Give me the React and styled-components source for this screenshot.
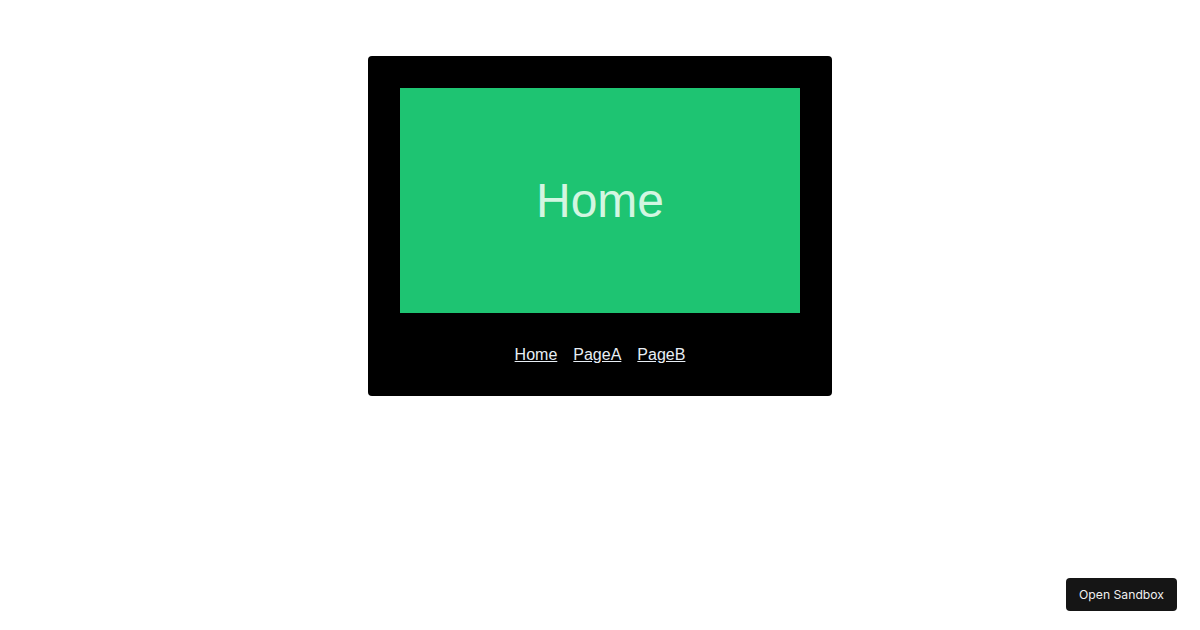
import React from "react";
import styled, { createGlobalStyle } from "styled-components";

const Global = createGlobalStyle`
  html, body { margin: 0; padding: 0; background: #ffffff; }
  body { font-family: "Liberation Sans", Arial, sans-serif; }
`;

const Page = styled.div`
  display: flex;
  justify-content: center;
  padding-top: 56px;
`;

const Card = styled.div`
  width: 464px;
  box-sizing: border-box;
  background: #000;
  border-radius: 4px;
  padding: 32px 32px 0;
  display: flex;
  flex-direction: column;
`;

const Screen = styled.div`
  height: 225px;
  background: #1ec472;
  display: flex;
  align-items: center;
  justify-content: center;
  color: #d3f6e1;
  font-size: 48px;
  font-family: "Liberation Sans", Arial, sans-serif;
`;

const Nav = styled.nav`
  display: flex;
  justify-content: center;
  gap: 16px;
  padding: 33px 0 32px;
  line-height: 18px;
`;

const NavLink = styled.a`
  color: #e8eef5;
  font-size: 16px;
  text-decoration: underline;
  cursor: pointer;
`;

const SandboxButton = styled.button`
  position: fixed;
  right: 23px;
  bottom: 19px;
  width: 111px;
  height: 33px;
  background: #151515;
  color: #f0f0f0;
  border: none;
  border-radius: 4px;
  font-family: Inter, "Liberation Sans", sans-serif;
  font-size: 12.2px;
  padding: 0;
`;

export default function App() {
  return (
    <>
      <Global />
      <Page>
        <Card>
          <Screen>Home</Screen>
          <Nav>
            <NavLink>Home</NavLink>
            <NavLink>PageA</NavLink>
            <NavLink>PageB</NavLink>
          </Nav>
        </Card>
      </Page>
      <SandboxButton>Open Sandbox</SandboxButton>
    </>
  );
}
